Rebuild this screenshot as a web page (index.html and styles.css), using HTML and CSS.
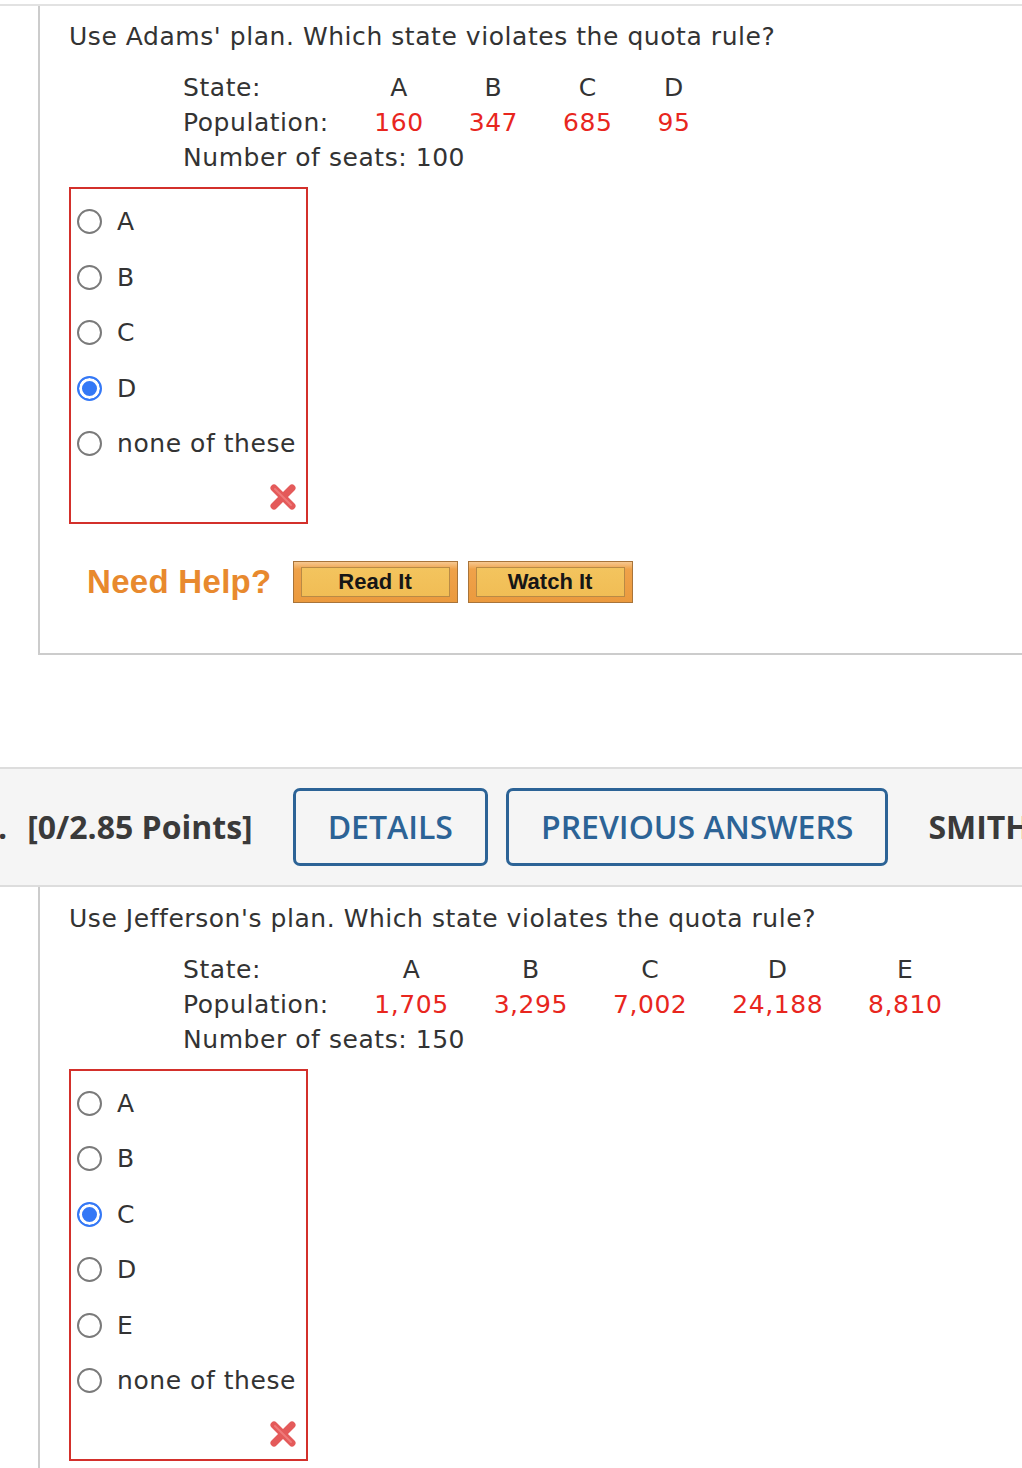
FILE: index.html
```html
<!DOCTYPE html>
<html lang="en">
<head>
<meta charset="utf-8">
<title>Quota rule questions</title>
<link rel="stylesheet" href="styles.css">
</head>
<body>
<div class="page">
  <section class="question first">
    <div class="panel">
      <p class="prompt">Use Adams' plan. Which state violates the quota rule?</p>
      <table class="data">
        <tr><td class="lbl">State:</td><td>A</td><td>B</td><td>C</td><td>D</td></tr>
        <tr><td class="lbl">Population:</td><td class="num">160</td><td class="num">347</td><td class="num">685</td><td class="num">95</td></tr>
        <tr><td class="lbl" colspan="5">Number of seats: 100</td></tr>
      </table>
      <div class="choices">
        <div class="choice"><span class="radio"></span><span class="opt">A</span></div>
        <div class="choice"><span class="radio"></span><span class="opt">B</span></div>
        <div class="choice"><span class="radio"></span><span class="opt">C</span></div>
        <div class="choice"><span class="radio checked"></span><span class="opt">D</span></div>
        <div class="choice"><span class="radio"></span><span class="opt">none of these</span></div>
        <div class="mark">
          <svg width="28" height="28" viewBox="0 0 28 28"><g stroke="#e45a5a" stroke-width="7" stroke-linecap="round"><line x1="5" y1="5" x2="23" y2="23"/><line x1="23" y1="5" x2="5" y2="23"/></g><g stroke="#ef7a7a" stroke-width="2" stroke-linecap="round"><line x1="6" y1="6" x2="22" y2="22"/></g></svg>
        </div>
      </div>
      <div class="help">
        <span class="help-title">Need Help?</span>
        <span class="help-btn"><span class="help-inner">Read It</span></span>
        <span class="help-btn"><span class="help-inner">Watch It</span></span>
      </div>
    </div>
  </section>

  <div class="qhead">
    <span class="qnum">.</span>
    <span class="points">[0/2.85 Points]</span>
    <span class="hbtn">DETAILS</span>
    <span class="hbtn">PREVIOUS ANSWERS</span>
    <span class="course">SMITH</span>
  </div>

  <section class="question second">
    <div class="panel open">
      <p class="prompt">Use Jefferson's plan. Which state violates the quota rule?</p>
      <table class="data">
        <tr><td class="lbl">State:</td><td>A</td><td>B</td><td>C</td><td>D</td><td>E</td></tr>
        <tr><td class="lbl">Population:</td><td class="num">1,705</td><td class="num">3,295</td><td class="num">7,002</td><td class="num">24,188</td><td class="num">8,810</td></tr>
        <tr><td class="lbl" colspan="6">Number of seats: 150</td></tr>
      </table>
      <div class="choices">
        <div class="choice"><span class="radio"></span><span class="opt">A</span></div>
        <div class="choice"><span class="radio"></span><span class="opt">B</span></div>
        <div class="choice"><span class="radio checked"></span><span class="opt">C</span></div>
        <div class="choice"><span class="radio"></span><span class="opt">D</span></div>
        <div class="choice"><span class="radio"></span><span class="opt">E</span></div>
        <div class="choice"><span class="radio"></span><span class="opt">none of these</span></div>
        <div class="mark">
          <svg width="28" height="28" viewBox="0 0 28 28"><g stroke="#e45a5a" stroke-width="7" stroke-linecap="round"><line x1="5" y1="5" x2="23" y2="23"/><line x1="23" y1="5" x2="5" y2="23"/></g><g stroke="#ef7a7a" stroke-width="2" stroke-linecap="round"><line x1="6" y1="6" x2="22" y2="22"/></g></svg>
        </div>
      </div>
    </div>
  </section>
</div>
</body>
</html>
```

FILE: styles.css
```css
html, body {
  margin: 0;
  padding: 0;
  background: #ffffff;
}
body {
  overflow: hidden;
  width: 1022px;
  height: 1468px;
  font-family: "DejaVu Sans", Verdana, sans-serif;
  color: #333333;
}
.page {
  padding-top: 4px;
}
.question.first {
  border-top: 2px solid #e2e2e2;
}
.panel {
  margin-left: 38px;
  border-left: 2px solid #cccccc;
  padding-left: 29px;
  padding-top: 15px;
}
.first .panel {
  border-bottom: 2px solid #cccccc;
  padding-bottom: 50px;
}
.second .panel {
  padding-top: 16px;
  height: 600px;
}
.prompt {
  margin: 0;
  font-size: 25px;
  letter-spacing: 0.55px;
  line-height: 31px;
  white-space: nowrap;
}
.data {
  border-collapse: collapse;
  margin: 18px 0 0 114px;
  font-size: 25px;
  letter-spacing: 0.55px;
}
.data td {
  height: 35px;
  padding: 0 22.5px;
  text-align: center;
  white-space: nowrap;
  vertical-align: middle;
}
.data td.lbl {
  padding-left: 0;
  padding-right: 23px;
  text-align: left;
}
.data td.num {
  color: #e8261e;
}
.choices {
  margin-top: 12px;
  width: 229px;
  border: 2px solid #d3302b;
  padding: 5px 0 0 6px;
}
.choice {
  height: 55.5px;
  display: flex;
  align-items: center;
  gap: 15px;
}
.radio {
  box-sizing: border-box;
  width: 25px;
  height: 25px;
  border: 2px solid #7a7a7a;
  border-radius: 50%;
  background: #ffffff;
  flex: none;
}
.radio.checked {
  border: 2px solid #3478f6;
  box-shadow: inset 0 0 0 3px #ffffff;
  background: #3478f6;
}
.opt {
  font-size: 25px;
  letter-spacing: 0.55px;
  line-height: 31px;
  color: #333333;
}
.mark {
  height: 50px;
  display: flex;
  align-items: center;
  justify-content: flex-end;
  padding-right: 9px;
}
.help {
  margin-top: 37px;
  margin-left: 18px;
  display: flex;
  align-items: center;
  height: 42px;
}
.help-title {
  font-family: "Liberation Sans", Arial, sans-serif;
  font-weight: bold;
  font-size: 33px;
  color: #e8892e;
  margin-right: 21px;
  letter-spacing: 0.3px;
}
.help-btn {
  box-sizing: border-box;
  width: 165px;
  height: 42px;
  margin-right: 10px;
  border: 1px solid #a8743a;
  background: linear-gradient(#f7c890 0%, #efa24a 18%, #eb9a3e 100%);
  padding: 5px 7px 5px 7px;
  display: flex;
}
.help-inner {
  flex: 1;
  border: 1px solid #b98a45;
  background: linear-gradient(#f3c45e, #f1bd55);
  display: flex;
  align-items: center;
  justify-content: center;
  font-family: "Liberation Sans", Arial, sans-serif;
  font-weight: bold;
  font-size: 22px;
  color: #161616;
}
.qhead {
  margin-top: 112px;
  border-top: 2px solid #dddddd;
  border-bottom: 2px solid #dddddd;
  background: #f5f5f5;
  height: 116px;
  display: flex;
  align-items: center;
  white-space: nowrap;
  overflow: hidden;
  font-family: "Open Sans", "Noto Sans", sans-serif;
}
.qnum {
  font-weight: bold;
  font-size: 32px;
  color: #3a3a3a;
  margin-left: -2px;
  margin-right: 20px;
}
.points {
  font-weight: bold;
  font-size: 32px;
  color: #3a3a3a;
  margin-right: 40px;
}
.hbtn {
  box-sizing: border-box;
  height: 78px;
  border: 3px solid #2c6396;
  border-radius: 7px;
  padding: 0 32px;
  display: flex;
  align-items: center;
  font-weight: 600;
  font-size: 32px;
  color: #2c6396;
  margin-right: 18px;
}
.course {
  margin-left: 22px;
  font-weight: bold;
  font-size: 32px;
  color: #3a3a3a;
}
```
